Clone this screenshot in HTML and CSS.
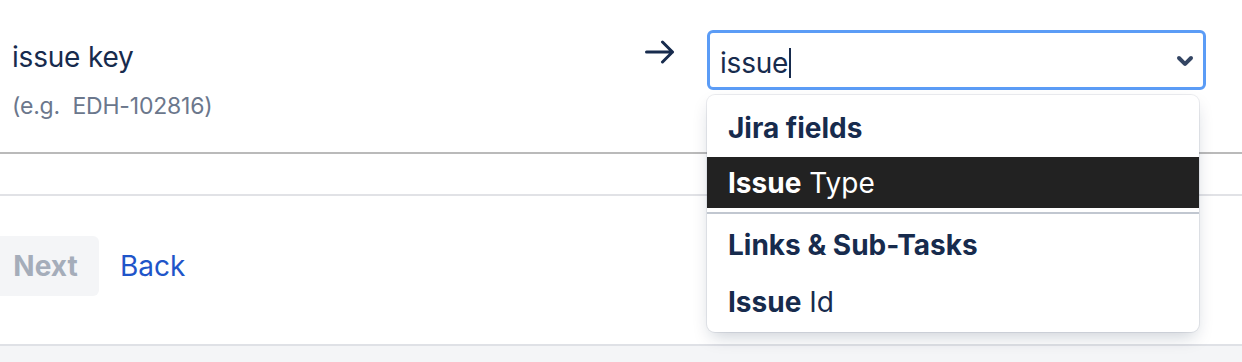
FILE: index.html
```html
<!DOCTYPE html>
<html lang="en">
<head>
<meta charset="utf-8">
<title>Field mapping</title>
<link rel="stylesheet" href="styles.css">
</head>
<body>
<div class="page">
  <div class="map-row">
    <div class="source">
      <div class="source-name">issue key</div>
      <div class="source-hint">(e.g.&nbsp; EDH-102816)</div>
    </div>
    <div class="arrow-col">
      <svg class="arrow" width="30" height="24" viewBox="0 0 30 24" aria-hidden="true">
        <path d="M1.5 12 H27.5 M17.5 2 L27.5 12 L17.5 22" fill="none" stroke="#172b4d" stroke-width="3" stroke-linecap="round" stroke-linejoin="round"/>
      </svg>
    </div>
    <div class="target">
      <div class="select">
        <div class="select-value"><span class="typed">issue</span><span class="caret"></span></div>
        <svg class="chevron" width="48" height="48" viewBox="0 0 24 24" aria-hidden="true">
          <path fill="#344563" d="M8.292 10.293a1.009 1.009 0 0 0 0 1.419l2.939 2.965c.218.215.5.322.779.322s.556-.107.769-.322l2.93-2.955a1.01 1.01 0 0 0 0-1.419.987.987 0 0 0-1.406 0l-2.298 2.317-2.307-2.327a.99.99 0 0 0-1.406 0z"/>
        </svg>
      </div>
      <div class="menu">
        <div class="group">
          <div class="group-title">Jira fields</div>
          <div class="option is-active"><b>Issue</b>&nbsp;Type</div>
        </div>
        <div class="group group-next">
          <div class="group-title">Links &amp; Sub-Tasks</div>
          <div class="option"><b>Issue</b>&nbsp;Id</div>
        </div>
      </div>
    </div>
  </div>
  <div class="rule-strong"></div>
  <div class="spacer"></div>
  <div class="rule-light"></div>
  <div class="footer">
    <button class="btn-next" disabled>Next</button>
    <a class="link-back" href="#">Back</a>
  </div>
  <div class="bottom-bar"></div>
</div>
</body>
</html>
```

FILE: styles.css
```css
* { box-sizing: border-box; }

html, body {
  margin: 0;
  padding: 0;
  background: #ffffff;
}

body {
  font-family: Inter, "Noto Sans", "Liberation Sans", sans-serif;
  color: #172b4d;
  width: 1242px;
  height: 362px;
  overflow: hidden;
}

.page {
  display: flex;
  flex-direction: column;
  height: 362px;
}

.map-row {
  display: flex;
  height: 152px;
  flex: 0 0 152px;
}

.source {
  flex: 0 0 645px;
  padding: 39px 0 0 12px;
}

.source-name {
  font-size: 28px;
  line-height: 36px;
  color: #172b4d;
  letter-spacing: -0.2px;
}

.source-hint {
  margin-top: 16px;
  font-size: 23px;
  line-height: 30px;
  color: #6b778c;
  letter-spacing: -0.2px;
}

.arrow-col {
  flex: 0 0 62px;
  padding-top: 40px;
}

.arrow {
  display: block;
}

.target {
  flex: 0 0 499px;
  padding-top: 30px;
  position: relative;
}

.select {
  height: 60px;
  border: 3px solid #5b9cf6;
  border-radius: 6px;
  display: flex;
  align-items: center;
  padding: 6px 0 0 10px;
  position: relative;
}

.select-value {
  flex: 1;
  display: flex;
  align-items: center;
  font-size: 28px;
  line-height: 36px;
  color: #172b4d;
  letter-spacing: -0.2px;
}

.caret {
  display: inline-block;
  width: 2px;
  height: 30px;
  background: #172b4d;
  margin-left: 1px;
}

.chevron {
  flex: 0 0 48px;
  margin-right: -6px;
  margin-top: -6px;
}

.menu {
  position: absolute;
  top: 95px;
  left: 0;
  width: 492px;
  background: #ffffff;
  border-radius: 8px;
  box-shadow: 0 0 0 1px rgba(9, 30, 66, 0.08), 0 8px 18px -4px rgba(9, 30, 66, 0.22);
  padding: 4px 0 5px;
  z-index: 10;
}

.group-title {
  height: 58px;
  display: flex;
  align-items: center;
  padding-left: 21px;
  font-size: 28px;
  font-weight: 700;
  color: #172b4d;
}

.group-next .group-title {
  height: 62px;
}

.option {
  height: 51px;
  display: flex;
  align-items: center;
  padding-left: 21px;
  font-size: 28px;
  color: #172b4d;
}

.option b {
  font-weight: 700;
}

.option.is-active {
  background: #222222;
  color: #ffffff;
}

.group-next {
  margin-top: 4px;
  border-top: 2px solid #c1c7d0;
}

.rule-strong {
  flex: 0 0 2px;
  background: #bababa;
}

.spacer {
  flex: 0 0 40px;
}

.rule-light {
  flex: 0 0 2px;
  background: #e1e2e6;
}

.footer {
  flex: 0 0 148px;
  display: flex;
  align-items: flex-start;
  padding-top: 40px;
}

.btn-next {
  margin-left: -8px;
  height: 60px;
  width: 107px;
  border: none;
  border-radius: 6px;
  background: #f4f5f7;
  color: #a5adba;
  font-family: inherit;
  font-size: 28px;
  font-weight: 700;
  padding: 0;
}

.link-back {
  margin-left: 21px;
  height: 60px;
  display: flex;
  align-items: center;
  font-size: 28px;
  color: #1f55c9;
  text-decoration: none;
}

.bottom-bar {
  flex: 1;
  border-top: 2px solid #dfe1e6;
  background: #f4f5f7;
}
```
